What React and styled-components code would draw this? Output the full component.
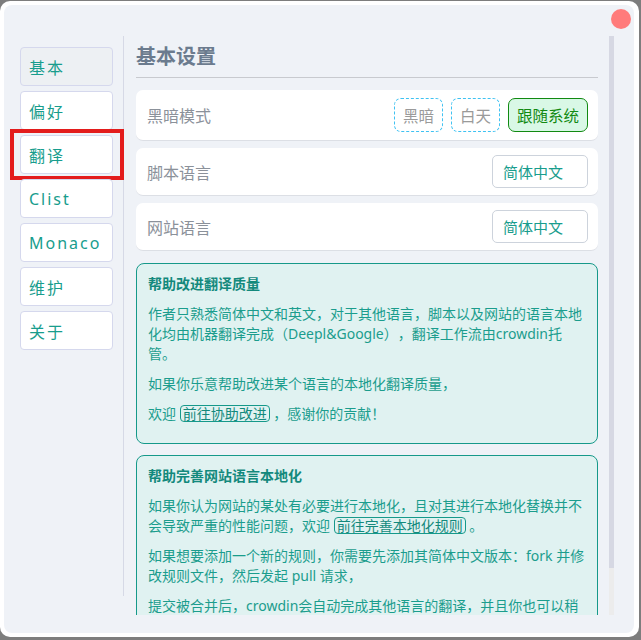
import React from 'react';
import styled, { createGlobalStyle } from 'styled-components';

const GlobalStyle = createGlobalStyle`
    html, body {
        margin: 0;
        padding: 0;
        background: #7d7d7d;
        font-family: "Noto Sans", "Noto Sans CJK SC", sans-serif;
    }
`;

const Frame = styled.div`
    width: 639px;
    height: 636px;
    margin-top: 1px;
    box-sizing: border-box;
    padding: 4px 5px 4px 4px;
    background: #ffffff;
    border-radius: 10px;
`;

const Panel = styled.div`
    height: 100%;
    display: flex;
    flex-direction: column;
    background: #eff2f7;
    border-radius: 8px;
`;

const Header = styled.div`
    height: 31px;
    flex-shrink: 0;
    display: flex;
    justify-content: flex-end;
    box-sizing: border-box;
    padding: 4px 3px 0 0;
`;

const CloseButton = styled.button`
    width: 20px;
    height: 20px;
    border: none;
    padding: 0;
    border-radius: 50%;
    background: #ff7b7b;
    cursor: pointer;
`;

const Body = styled.div`
    display: flex;
    height: 579px;
    padding: 0 20px 0 16px;
`;

const Sidebar = styled.nav`
    width: 104px;
    height: 560px;
    flex-shrink: 0;
    box-sizing: border-box;
    padding: 11px 10px 0 0;
    border-right: 1px solid #d6d9e6;
    display: flex;
    flex-direction: column;
    gap: 5px;
`;

const NavItem = styled.div`
    position: relative;
    height: 39px;
    box-sizing: border-box;
    padding: 0 8px;
    display: flex;
    align-items: center;
    border: 1px solid #d5d8ed;
    border-radius: 4px;
    background: ${p => (p.$active ? '#edf0f3' : '#ffffff')};
    color: #189d8d;
    font-size: 16px;
    letter-spacing: 2px;
    cursor: pointer;

    ${p => p.$marked && `
        &::after {
            content: '';
            position: absolute;
            top: -7px;
            left: -11px;
            right: -12px;
            bottom: -7px;
            border: 4px solid #e31c1c;
            pointer-events: none;
        }
    `}
`;

const Main = styled.main`
    flex: 1;
    min-width: 0;
    height: 579px;
    overflow-y: auto;
    box-sizing: border-box;
    padding: 9px 11px 8px 12px;
    scrollbar-width: none;

    &::-webkit-scrollbar {
        display: none;
    }
`;

const ScrollRail = styled.div`
    width: 5px;
    flex-shrink: 0;
    display: flex;
    flex-direction: column;
    background: #ececec;
`;

const ScrollThumb = styled.div`
    height: ${p => p.$size}px;
    background: #d6d8e3;
`;

const Title = styled.h2`
    margin: 0 0 12px;
    padding-bottom: 8px;
    border-bottom: 1px solid #c8cacf;
    font-size: 20px;
    line-height: 24px;
    font-weight: 700;
    color: #6b7b8e;
`;

const Row = styled.div`
    display: flex;
    align-items: center;
    justify-content: space-between;
    padding: ${p => (p.$tall ? '8px' : '7px')} 10px ${p => (p.$tall ? '8px' : '7px')} 11px;
    margin-bottom: 7px;
    background: #ffffff;
    border-radius: 7px;
    border-bottom: 1px solid #dcdfe5;
`;

const Label = styled.span`
    font-size: 16px;
    color: #8b919a;
`;

const Options = styled.div`
    display: flex;
    gap: 8px;
`;

const Option = styled.button`
    height: 34px;
    padding: 0 8px;
    font-family: inherit;
    font-size: 15.5px;
    border-radius: 7px;
    cursor: pointer;
    border: 1px ${p => (p.$selected ? 'solid #118a11' : 'dashed #3fc2f2')};
    background: ${p => (p.$selected ? '#d9f8e6' : '#ffffff')};
    color: ${p => (p.$selected ? '#128a12' : '#9a9a9a')};
`;

const Select = styled.div`
    width: 96px;
    height: 33px;
    box-sizing: border-box;
    padding: 0 10px;
    display: flex;
    align-items: center;
    border: 1px solid #cdd3dc;
    border-radius: 5px;
    background: #ffffff;
    color: #189d8d;
    font-size: 15px;
`;

const Card = styled.section`
    margin-top: 12px;
    padding: 10px 11px;
    border: 1px solid #16998a;
    border-radius: 8px;
    background: #e0f2f1;
    color: #1b9d8d;
    font-size: 14px;
    line-height: 20.3px;
    text-spacing-trim: space-all;

    & + & {
        margin-top: 11px;
    }
`;

const CardTitle = styled.h3`
    margin: 0 0 9.5px;
    font-size: 14px;
    line-height: 20px;
    font-weight: 700;
    color: #13897c;
`;

const Para = styled.p`
    margin: 0 0 9.5px;
`;

const Chip = styled.a`
    display: inline-block;
    padding: 0 2px;
    line-height: 15px;
    border: 1px solid #16998a;
    border-radius: 4px;
    color: #13897c;
    text-decoration: none;
    cursor: pointer;
`;

const navItems = ['基本', '偏好', '翻译', 'Clist', 'Monaco', '维护', '关于'];

const SettingRow = ({ label, children, tall }) => (
    <Row $tall={tall}>
        <Label>{label}</Label>
        {children}
    </Row>
);

const App = () => (
    <>
        <GlobalStyle />
        <Frame>
            <Panel>
                <Header>
                    <CloseButton aria-label="close" />
                </Header>
                <Body>
                    <Sidebar>
                        {navItems.map((name, i) => (
                            <NavItem key={name} $active={i === 0} $marked={name === '翻译'}>
                                {name}
                            </NavItem>
                        ))}
                    </Sidebar>
                    <Main>
                        <Title>基本设置</Title>
                        <SettingRow label="黑暗模式" tall>
                            <Options>
                                <Option>黑暗</Option>
                                <Option>白天</Option>
                                <Option $selected>跟随系统</Option>
                            </Options>
                        </SettingRow>
                        <SettingRow label="脚本语言">
                            <Select>简体中文</Select>
                        </SettingRow>
                        <SettingRow label="网站语言">
                            <Select>简体中文</Select>
                        </SettingRow>

                        <Card>
                            <CardTitle>帮助改进翻译质量</CardTitle>
                            <Para>
                                作者只熟悉简体中文和英文，对于其他语言，脚本以及网站的语言本地化均由机器翻译完成（Deepl&amp;Google），翻译工作流由crowdin托管。
                            </Para>
                            <Para>如果你乐意帮助改进某个语言的本地化翻译质量，</Para>
                            <Para>
                                欢迎 <Chip>前往协助改进</Chip> ，感谢你的贡献！
                            </Para>
                        </Card>

                        <Card>
                            <CardTitle>帮助完善网站语言本地化</CardTitle>
                            <Para>
                                如果你认为网站的某处有必要进行本地化，且对其进行本地化替换并不会导致严重的性能问题，欢迎 <Chip>前往完善本地化规则</Chip> 。
                            </Para>
                            <Para>
                                如果想要添加一个新的规则，你需要先添加其简体中文版本：fork 并修改规则文件，然后发起 pull 请求，
                            </Para>
                            <Para>
                                提交被合并后，crowdin会自动完成其他语言的翻译，并且你也可以稍后在 crowdin 上进行修改。
                            </Para>
                        </Card>
                    </Main>
                    <ScrollRail>
                        <ScrollThumb $size={532} />
                    </ScrollRail>
                </Body>
            </Panel>
        </Frame>
    </>
);

export default App;
